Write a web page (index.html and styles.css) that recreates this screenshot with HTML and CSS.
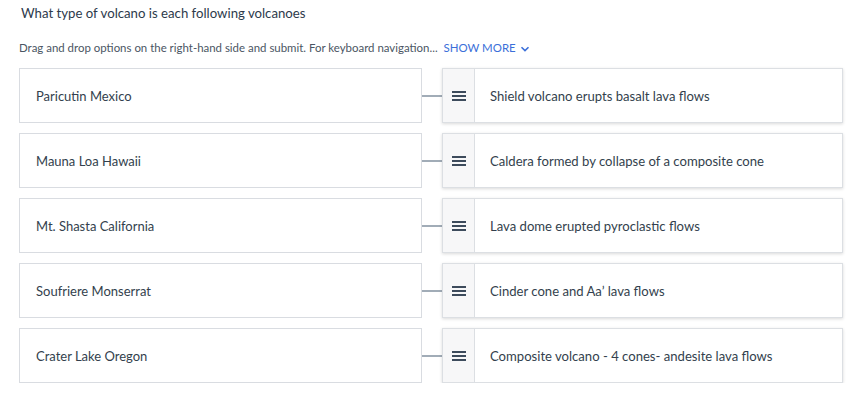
FILE: index.html
```html
<!DOCTYPE html>
<html lang="en">

<head>
    <meta charset="UTF-8">
    <meta name="viewport" content="width=device-width, initial-scale=1.0">
    <title>Matching Question</title>
    <link rel="stylesheet" href="styles.css">
</head>

<body>
    <div class="question">
        <div class="prompt">What type of volcano is each following volcanoes</div>
        <div class="instructions">
            Drag and drop options on the right-hand side and submit. For keyboard navigation...
            <span class="show-more">SHOW MORE
                <svg width="10" height="10" viewBox="0 0 10 10"><path d="M1.5 3.2 L5 6.6 L8.5 3.2" fill="none" stroke="#3b6fd9" stroke-width="1.6"/></svg>
            </span>
        </div>
        <div class="match-list">
            <div class="match-row">
                <div class="term">Paricutin Mexico</div>
                <div class="connector"></div>
                <div class="answer">
                    <div class="handle"><span class="bars"></span></div>
                    <div class="answer-text">Shield volcano erupts basalt lava flows</div>
                </div>
            </div>
            <div class="match-row">
                <div class="term">Mauna Loa Hawaii</div>
                <div class="connector"></div>
                <div class="answer">
                    <div class="handle"><span class="bars"></span></div>
                    <div class="answer-text">Caldera formed by collapse of a composite cone</div>
                </div>
            </div>
            <div class="match-row">
                <div class="term">Mt. Shasta California</div>
                <div class="connector"></div>
                <div class="answer">
                    <div class="handle"><span class="bars"></span></div>
                    <div class="answer-text">Lava dome erupted pyroclastic flows</div>
                </div>
            </div>
            <div class="match-row">
                <div class="term">Soufriere Monserrat</div>
                <div class="connector"></div>
                <div class="answer">
                    <div class="handle"><span class="bars"></span></div>
                    <div class="answer-text">Cinder cone and Aa’ lava flows</div>
                </div>
            </div>
            <div class="match-row">
                <div class="term">Crater Lake Oregon</div>
                <div class="connector"></div>
                <div class="answer">
                    <div class="handle"><span class="bars"></span></div>
                    <div class="answer-text">Composite volcano - 4 cones- andesite lava flows</div>
                </div>
            </div>
        </div>
    </div>
</body>

</html>
```

FILE: styles.css
```css
body {
    margin: 0;
    background-color: #fff;
    font-family: Lato, "Open Sans", sans-serif;
    color: #333f4d;
}

.question {
    padding: 4px 18px 0 19px;
}

.prompt {
    font-size: 13.2px;
    line-height: 18px;
    padding-left: 2px;
    color: #2d3a4b;
}

.instructions {
    margin-top: 18px;
    font-size: 11.45px;
    line-height: 16px;
    color: #4a5563;
}

.show-more {
    color: #3b6fd9;
    margin-left: 3px;
}

.show-more svg {
    vertical-align: middle;
    margin-left: 1px;
}

.match-list {
    display: flex;
    flex-direction: column;
    gap: 10px;
    margin-top: 12px;
}

.match-row {
    display: flex;
    align-items: center;
    height: 55px;
}

.term {
    width: 403px;
    height: 55px;
    box-sizing: border-box;
    border: 1px solid #d9dce1;
    padding-left: 16px;
    display: flex;
    align-items: center;
    font-size: 13px;
    color: #333f4d;
}

.connector {
    width: 20px;
    height: 2px;
    background-color: #a1acb7;
}

.answer {
    width: 401px;
    height: 55px;
    box-sizing: border-box;
    border: 1px solid #dcdfe3;
    display: flex;
    box-shadow: 0 1px 3px rgba(0, 0, 0, 0.15);
}

.handle {
    width: 31px;
    background-color: #f7f7f8;
    border-right: 1px solid #dcdfe3;
    display: flex;
    align-items: center;
    justify-content: center;
}

.bars {
    width: 14px;
    height: 2px;
    background-color: #3d4b5c;
    box-shadow: 0 -4px 0 #3d4b5c, 0 4px 0 #3d4b5c;
}

.answer-text {
    display: flex;
    align-items: center;
    padding-left: 15px;
    font-size: 13.1px;
    color: #333f4d;
}
```
